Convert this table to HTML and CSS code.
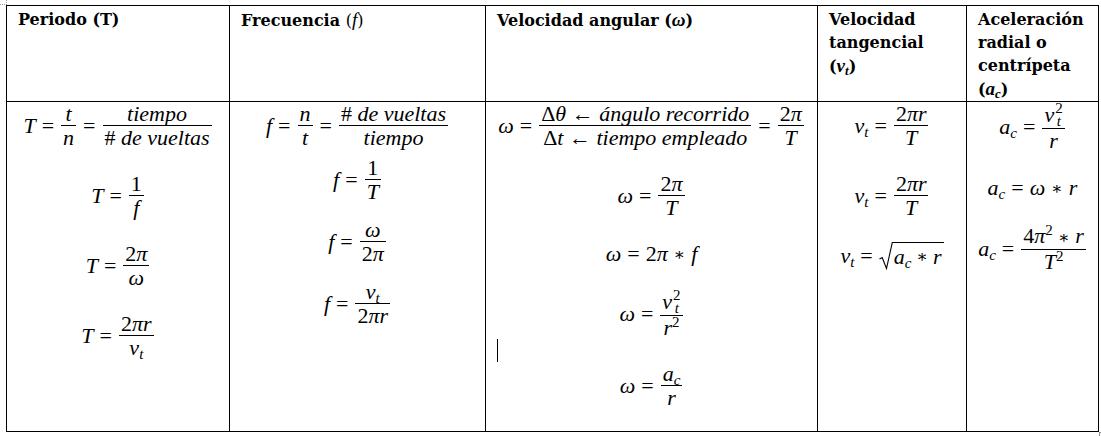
FILE: index.html
```html
<!DOCTYPE html>
<html lang="es">
<head>
<meta charset="utf-8">
<title>Movimiento circular uniforme</title>
<link rel="stylesheet" href="styles.css">
</head>
<body>
<div class="page">
  <span class="move-handle"></span>
  <table class="formulas">
    <colgroup>
      <col class="c1"><col class="c2"><col class="c3"><col class="c4"><col class="c5">
    </colgroup>
    <thead>
      <tr class="head-row">
        <th>Periodo (T)</th>
        <th>Frecuencia <span class="plain">(<i class="mi">f</i>)</span></th>
        <th>Velocidad angular (<i class="mi">ω</i>)</th>
        <th>Velocidad tangencial (<span class="hv"><i class="mi">v</i><sub>t</sub></span>)</th>
        <th>Aceleración radial o centrípeta (<span class="hv"><i class="mi">a</i><sub>c</sub></span>)</th>
      </tr>
    </thead>
    <tbody>
      <tr class="body-row">
        <td>
          <div class="stack">
            <div class="eq">
              <i>T</i><span class="op">=</span>
              <span class="frac"><span class="num"><i>t</i></span><span class="den"><i>n</i></span></span>
              <span class="op">=</span>
              <span class="frac"><span class="num"><i>tiempo</i></span><span class="den"># <i>de vueltas</i></span></span>
            </div>
            <div class="eq">
              <i>T</i><span class="op">=</span>
              <span class="frac"><span class="num">1</span><span class="den"><i>f</i></span></span>
            </div>
            <div class="eq">
              <i>T</i><span class="op">=</span>
              <span class="frac"><span class="num">2<i>π</i></span><span class="den"><i>ω</i></span></span>
            </div>
            <div class="eq">
              <i>T</i><span class="op">=</span>
              <span class="frac"><span class="num">2<i>πr</i></span><span class="den"><i>v</i><sub>t</sub></span></span>
            </div>
          </div>
        </td>
        <td>
          <div class="stack stack-tight">
            <div class="eq eq-close">
              <i>f</i><span class="op">=</span>
              <span class="frac"><span class="num"><i>n</i></span><span class="den"><i>t</i></span></span>
              <span class="op">=</span>
              <span class="frac"><span class="num"># <i>de vueltas</i></span><span class="den"><i>tiempo</i></span></span>
            </div>
            <div class="eq">
              <i>f</i><span class="op">=</span>
              <span class="frac"><span class="num">1</span><span class="den"><i>T</i></span></span>
            </div>
            <div class="eq">
              <i>f</i><span class="op">=</span>
              <span class="frac"><span class="num"><i>ω</i></span><span class="den">2<i>π</i></span></span>
            </div>
            <div class="eq">
              <i>f</i><span class="op">=</span>
              <span class="frac"><span class="num"><i>v</i><sub>t</sub></span><span class="den">2<i>πr</i></span></span>
            </div>
          </div>
        </td>
        <td class="angular">
          <span class="caret"></span>
          <div class="stack stack-mid">
            <div class="eq">
              <i>ω</i><span class="op">=</span>
              <span class="frac">
                <span class="num">Δ<i>θ</i> ← <i>ángulo recorrido</i></span>
                <span class="den">Δ<i>t</i> ← <i>tiempo empleado</i></span>
              </span>
              <span class="op">=</span>
              <span class="frac"><span class="num">2<i>π</i></span><span class="den"><i>T</i></span></span>
            </div>
            <div class="eq">
              <i>ω</i><span class="op">=</span>
              <span class="frac"><span class="num">2<i>π</i></span><span class="den"><i>T</i></span></span>
            </div>
            <div class="eq">
              <i>ω</i><span class="op">=</span>
              <span>2<i>π</i></span><span class="op star">∗</span><i>f</i>
            </div>
            <div class="eq">
              <i>ω</i><span class="op">=</span>
              <span class="frac"><span class="num"><i>v</i><span class="ss"><span>2</span><i>t</i></span></span><span class="den"><i>r</i><sup>2</sup></span></span>
            </div>
            <div class="eq">
              <i>ω</i><span class="op">=</span>
              <span class="frac"><span class="num"><i>a</i><sub>c</sub></span><span class="den"><i>r</i></span></span>
            </div>
          </div>
        </td>
        <td>
          <div class="stack stack-mid">
            <div class="eq">
              <span class="var"><i>v</i><sub>t</sub></span><span class="op">=</span>
              <span class="frac"><span class="num">2<i>πr</i></span><span class="den"><i>T</i></span></span>
            </div>
            <div class="eq">
              <span class="var"><i>v</i><sub>t</sub></span><span class="op">=</span>
              <span class="frac"><span class="num">2<i>πr</i></span><span class="den"><i>T</i></span></span>
            </div>
            <div class="eq">
              <span class="var"><i>v</i><sub>t</sub></span><span class="op">=</span>
              <span class="sqrt">
                <svg class="radical" width="14" height="28" viewBox="0 0 14 28"><path d="M0.5 17 L3.2 15.5 L7.5 26.5 L13.3 0.5 L14 0.5" fill="none" stroke="#000" stroke-width="1.1"/></svg>
                <span class="radicand"><span class="var"><i>a</i><sub>c</sub></span><span class="op star">∗</span><i>r</i></span>
              </span>
            </div>
          </div>
        </td>
        <td>
          <div class="stack stack-wide">
            <div class="eq">
              <span class="var"><i>a</i><sub>c</sub></span><span class="op">=</span>
              <span class="frac"><span class="num"><i>v</i><span class="ss"><span>2</span><i>t</i></span></span><span class="den"><i>r</i></span></span>
            </div>
            <div class="eq">
              <span class="var"><i>a</i><sub>c</sub></span><span class="op">=</span>
              <i>ω</i><span class="op star">∗</span><i>r</i>
            </div>
            <div class="eq">
              <span class="var"><i>a</i><sub>c</sub></span><span class="op">=</span>
              <span class="frac"><span class="num">4<i>π</i><sup>2</sup> <span class="star">∗</span> <i>r</i></span><span class="den"><i>T</i><sup>2</sup></span></span>
            </div>
          </div>
        </td>
      </tr>
    </tbody>
  </table>
  <span class="resize-handle"></span>
</div>
</body>
</html>
```

FILE: styles.css
```css
html, body {
  margin: 0;
  background: #fff;
  color: #000;
}

body {
  font-family: "DejaVu Serif", "Liberation Serif", serif;
}

.page {
  position: relative;
  width: 1101px;
  height: 436px;
  padding: 5px 0 0 6px;
  box-sizing: border-box;
}

.move-handle {
  position: absolute;
  left: 0;
  top: 0;
  width: 6px;
  height: 4px;
  border: 1px dotted #9a9a9a;
  border-top: none;
  border-left: none;
}

.resize-handle {
  position: absolute;
  left: 1099px;
  top: 432px;
  width: 3px;
  height: 4px;
  border-top: 1px solid #8a8a8a;
  border-left: 1px solid #8a8a8a;
}

.formulas {
  border-collapse: collapse;
  table-layout: fixed;
  width: 1092px;
}

.c1 { width: 223px; }
.c2 { width: 256px; }
.c3 { width: 332px; }
.c4 { width: 149px; }
.c5 { width: 132px; }

.formulas th,
.formulas td {
  border: 1px solid #000;
  vertical-align: top;
}

.head-row { height: 95px; }
.body-row { height: 330px; }

.formulas th {
  padding: 2px 11px 0;
  text-align: left;
  font-size: 16px;
  line-height: 23px;
  font-weight: bold;
}

.formulas th .plain {
  font-weight: normal;
}

.mi {
  font-family: "Liberation Serif", "DejaVu Serif", serif;
  font-style: italic;
  font-size: 19px;
}

.hv sub {
  font-family: "Liberation Serif", "DejaVu Serif", serif;
  font-size: 13px;
  font-weight: bold;
  font-style: italic;
  vertical-align: -3px;
  line-height: 0;
}

.formulas td {
  padding: 0 2px;
  position: relative;
}

.stack {
  display: flex;
  flex-direction: column;
  align-items: center;
  gap: 23px;
  font-family: "Liberation Serif", "DejaVu Serif", serif;
  font-size: 22px;
}

.stack-tight { gap: 15px; }
.stack-mid { gap: 23px; }
.stack-wide { gap: 24px; }

.eq-close { margin-bottom: -8px; }

.eq {
  display: flex;
  align-items: center;
  white-space: nowrap;
  line-height: 24px;
}

.eq i {
  font-style: italic;
}

.op {
  margin: 0 6px;
  font-style: normal;
}

.star {
  font-family: "DejaVu Serif", serif;
  font-size: 17px;
}

.frac {
  display: inline-flex;
  flex-direction: column;
  align-items: center;
  margin: 0 1px;
}

.num {
  align-self: stretch;
  text-align: center;
  border-bottom: 1px solid #000;
  line-height: 23px;
  padding: 0 2px;
}

.den {
  line-height: 23px;
  padding: 0 2px;
}

.eq sub {
  font-size: 15px;
  font-style: italic;
  vertical-align: -4px;
  line-height: 0;
}

.eq sup {
  font-size: 15px;
  vertical-align: 8px;
  line-height: 0;
}

.ss {
  display: inline-flex;
  flex-direction: column;
  font-size: 15px;
  line-height: 13px;
  vertical-align: 9px;
  margin-left: 1px;
}

.var {
  white-space: nowrap;
}

.sqrt {
  display: flex;
  align-items: stretch;
}

.radical {
  display: block;
  flex: none;
}

.radicand {
  display: flex;
  align-items: center;
  border-top: 1px solid #000;
  padding: 0 2px 0 1px;
  line-height: 27px;
}

.radicand .op {
  margin: 0 5px;
}

.caret {
  position: absolute;
  left: 11px;
  top: 237px;
  width: 1px;
  height: 23px;
  background: #000;
}
```
